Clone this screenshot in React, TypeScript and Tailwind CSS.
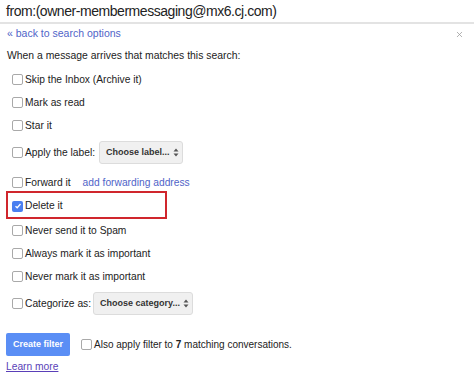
import { X } from "lucide-react"

function Box({ checked = false }: { checked?: boolean }) {
    if (checked) {
        return (
            <span className="w-[11px] h-[11px] rounded-[2px] bg-[#4a7ff0] flex items-center justify-center shrink-0">
                <svg width="8" height="8" viewBox="0 0 8 8" fill="none">
                    <path d="M1.5 4.2 L3.2 5.8 L6.5 2" stroke="white" strokeWidth="1.3" />
                </svg>
            </span>
        )
    }
    return <span className="w-[11px] h-[11px] rounded-[2px] border border-[#a9a9a9] bg-white shrink-0" />
}

function Select({ label, width }: { label: string; width: string }) {
    return (
        <span className={`${width} h-[23px] flex items-center justify-between pl-[6px] pr-[6px] bg-[#f0f0f0] border border-[#dcdcdc] rounded-[3px] text-[9px] font-bold text-[#333] whitespace-nowrap`}>
            {label}
            <svg width="6" height="9" viewBox="0 0 6 9" className="ml-[3px] shrink-0">
                <path d="M3 0.5 L5.5 3.5 H0.5 Z M3 8.5 L5.5 5.5 H0.5 Z" fill="#555" />
            </svg>
        </span>
    )
}

function Row({ label, checked, className = "", children }: { label: string; checked?: boolean; className?: string; children?: React.ReactNode }) {
    return (
        <div className={`flex items-center h-[23px] pl-[12px] ${className}`}>
            <Box checked={checked} />
            <span className="ml-[2px]">{label}</span>
            {children}
        </div>
    )
}

export default function App() {
    return (
        <div className="w-[474px] h-[382px] bg-white text-[#222] overflow-hidden" style={{ fontFamily: "Arial, 'Liberation Sans', sans-serif" }}>
            <div className="h-[24px] pl-[6px] text-[14px] tracking-[-0.45px] leading-[23px] text-[#222] border-b-2 border-[#e3e3e3]">
                from:(owner-membermessaging@mx6.cj.com)
            </div>
            <div className="text-[10.25px]">
                <div className="flex items-center justify-between h-[20px] pl-[7px] pr-[10px]">
                    <span className="text-[#5064c8] text-[10.5px]">« back to search options</span>
                    <X className="w-[9px] h-[9px] text-[#999]" strokeWidth={2} />
                </div>
                <div className="h-[24px] flex items-center pl-[7px] text-[10.4px]">When a message arrives that matches this search:</div>
                <div className="flex flex-col">
                    <Row label="Skip the Inbox (Archive it)" />
                    <Row label="Mark as read" />
                    <Row label="Star it" />
                    <Row label="Apply the label:" className="mt-[4px]">
                        <span className="ml-[4px]"><Select label="Choose label..." width="w-[84px]" /></span>
                    </Row>
                    <Row label="Forward it" className="mt-[7px]">
                        <span className="ml-[12px] text-[#5064c8]">add forwarding address</span>
                    </Row>
                    <div className="ml-[6px] mt-[-3px] w-[161px] h-[28px] border-2 border-[#d0262d] flex items-center pl-[4px] pt-[2px]">
                        <Box checked />
                        <span className="ml-[2px]">Delete it</span>
                    </div>
                    <Row label="Never send it to Spam" />
                    <Row label="Always mark it as important" />
                    <Row label="Never mark it as important" />
                    <Row label="Categorize as:" className="mt-[4px]">
                        <span className="ml-[2px]"><Select label="Choose category..." width="w-[100px]" /></span>
                    </Row>
                </div>
                <div className="flex items-center pl-[6px] mt-[18px]">
                    <button className="w-[64px] h-[23px] rounded-[2px] bg-[#5a8ef5] text-white text-[9px] font-bold">Create filter</button>
                    <span className="ml-[11px] flex items-center">
                        <Box />
                        <span className="ml-[2px] text-[10px]">Also apply filter to <b>7</b> matching conversations.</span>
                    </span>
                </div>
                <div className="pl-[6px] mt-[3px] underline text-[#5a3fb8]">Learn more</div>
            </div>
        </div>
    )
}
